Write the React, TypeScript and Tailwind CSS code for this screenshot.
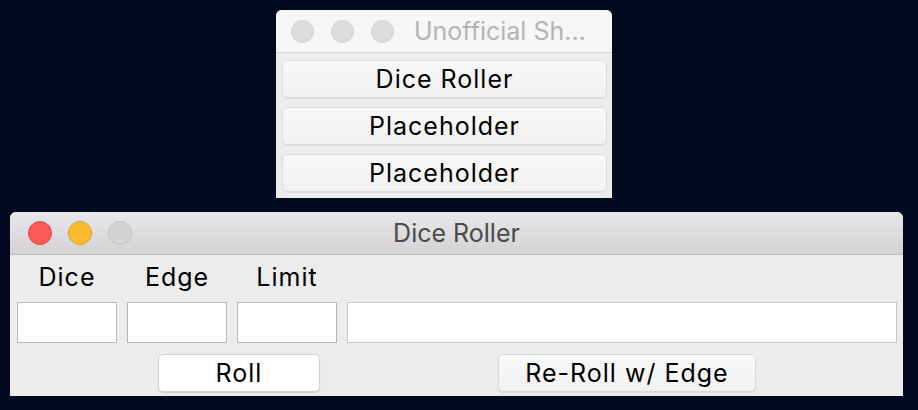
export default function App() {
  const font = { fontFamily: 'Inter, "Liberation Sans", sans-serif' };

  return (
    <div className="relative w-[918px] h-[410px] bg-[#020a20] overflow-hidden" style={font}>
      {/* menu window (inactive) */}
      <div className="absolute left-[276px] top-[10px] w-[336px] h-[188px] bg-[#ececec] rounded-t-[6px] overflow-hidden flex flex-col">
        <div className="h-[43px] shrink-0 bg-[#f6f6f6] border-b border-[#d6d6d6] flex items-center pl-[15px]">
          <div className="flex gap-[17px]">
            <span className="w-[23px] h-[23px] rounded-full bg-[#dcdcdc] border border-[#d2d2d2]" />
            <span className="w-[23px] h-[23px] rounded-full bg-[#dcdcdc] border border-[#d2d2d2]" />
            <span className="w-[23px] h-[23px] rounded-full bg-[#dcdcdc] border border-[#d2d2d2]" />
          </div>
          <span className="ml-[20px] text-[25px] text-[#b4b4b4] leading-none whitespace-nowrap">Unofficial Sh...</span>
        </div>
        <div className="flex flex-col gap-[9px] pt-[7px] pl-[6px] pr-[5px]">
          {['Dice Roller', 'Placeholder', 'Placeholder'].map((label, i) => (
            <button
              key={i}
              className="h-[38px] rounded-[5px] bg-gradient-to-b from-[#f8f8f8] to-[#f1f1f1] border border-[#dcdcdc] shadow-[0_1px_0_rgba(0,0,0,0.06)] text-[25px] tracking-[1px] text-black leading-none"
            >
              {label}
            </button>
          ))}
        </div>
      </div>

      {/* dice roller window (active) */}
      <div className="absolute left-[10px] top-[212px] w-[893px] h-[184px] bg-[#ececec] rounded-t-[6px] overflow-hidden flex flex-col">
        <div className="relative h-[43px] shrink-0 bg-gradient-to-b from-[#e9e7e9] to-[#d4d2d4] border-b border-[#c2c0c2] flex items-center pl-[18px]">
          <div className="flex gap-[16px]">
            <span className="w-[24px] h-[24px] rounded-full bg-[#fc5a55] border border-[#e0443e]" />
            <span className="w-[24px] h-[24px] rounded-full bg-[#fdbc2f] border border-[#dea125]" />
            <span className="w-[24px] h-[24px] rounded-full bg-[#d3d3d3] border border-[#bfbfbf]" />
          </div>
          <span className="absolute left-0 right-0 text-center text-[25px] text-[#4a4a4a] leading-none">Dice Roller</span>
        </div>

        <div className="grid grid-cols-[100px_100px_100px_550px] gap-x-[10px] pl-[7px] pt-[6px]">
          <span className="text-center text-[25px] tracking-[1px] text-black leading-[32px]">Dice</span>
          <span className="text-center text-[25px] tracking-[1px] text-black leading-[32px]">Edge</span>
          <span className="text-center text-[25px] tracking-[1px] text-black leading-[32px]">Limit</span>
          <span />
          <input className="mt-[9px] h-[41px] bg-white border border-[#b8b8b8] outline-none" />
          <input className="mt-[9px] h-[41px] bg-white border border-[#b8b8b8] outline-none" />
          <input className="mt-[9px] h-[41px] bg-white border border-[#b8b8b8] outline-none" />
          <input className="mt-[9px] h-[41px] bg-white border border-[#c8c8c8] outline-none" />
        </div>

        <div className="flex pt-[11px]">
          <button className="ml-[148px] w-[162px] h-[38px] rounded-[5px] bg-white border border-[#d4d4d4] shadow-[0_1px_1px_rgba(0,0,0,0.12)] text-[25px] tracking-[1px] text-black leading-none">
            Roll
          </button>
          <button className="ml-[178px] w-[258px] h-[38px] rounded-[5px] bg-gradient-to-b from-[#f8f8f8] to-[#f1f1f1] border border-[#d8d8d8] shadow-[0_1px_1px_rgba(0,0,0,0.08)] text-[25px] tracking-[1px] text-black leading-none">
            Re-Roll w/ Edge
          </button>
        </div>
      </div>
    </div>
  );
}
